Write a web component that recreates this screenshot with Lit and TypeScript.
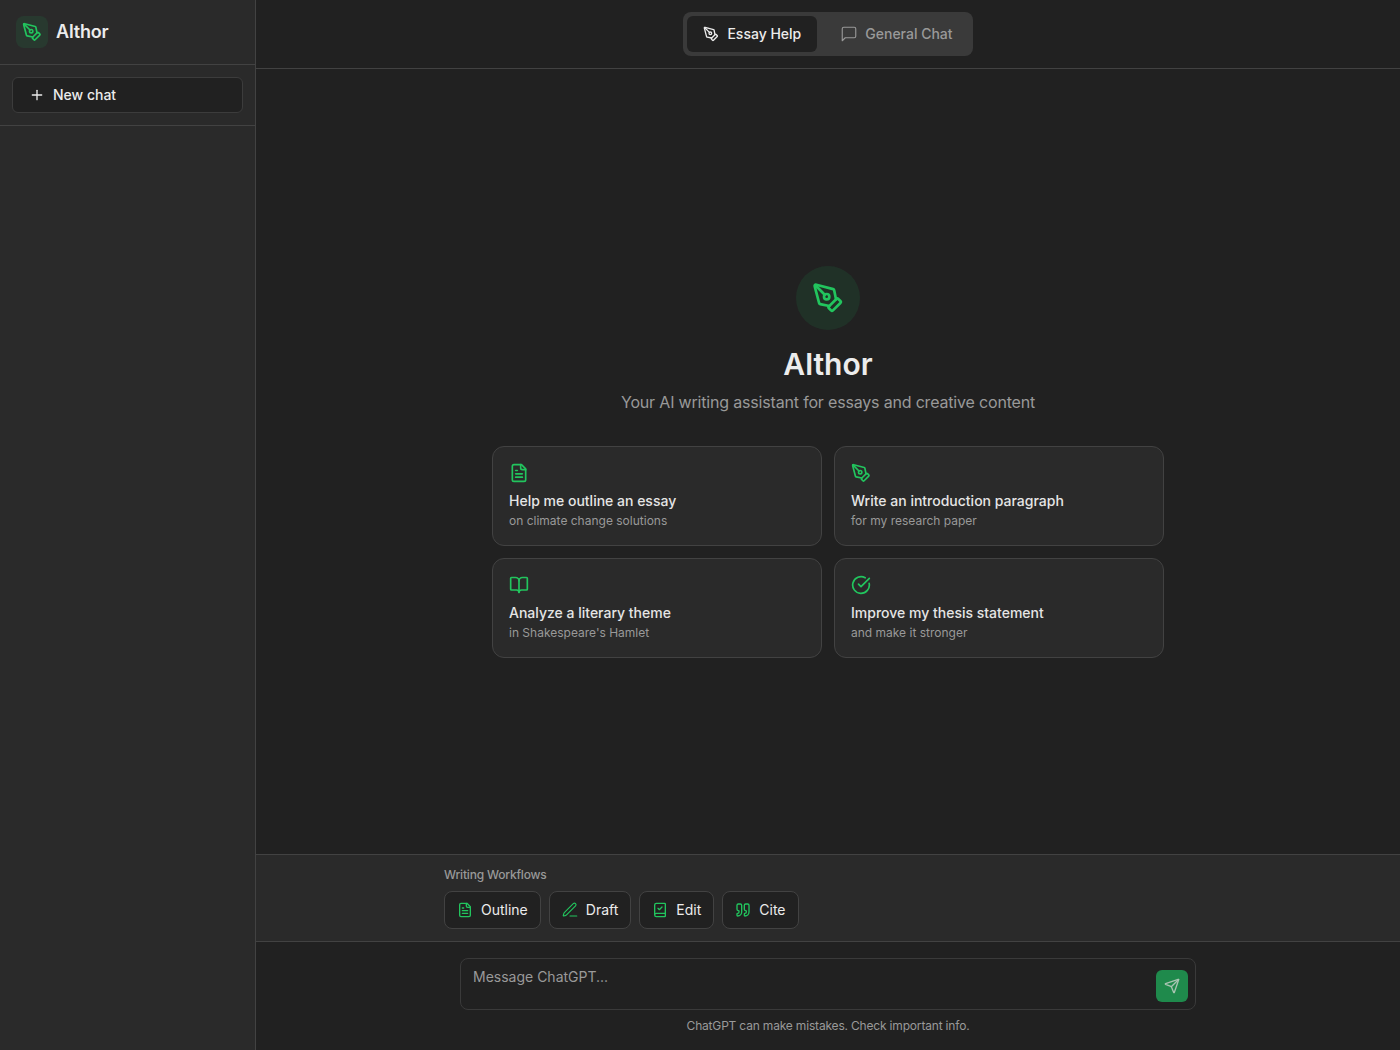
import { LitElement, css, html, svg } from 'lit';
import { customElement } from 'lit/decorators.js';

const icons = {
  pen: svg`<path d="M15.707 21.293a1 1 0 0 1-1.414 0l-1.586-1.586a1 1 0 0 1 0-1.414l5.586-5.586a1 1 0 0 1 1.414 0l1.586 1.586a1 1 0 0 1 0 1.414z"/><path d="m18 13-1.375-6.874a1 1 0 0 0-.746-.776L3.235 2.028a1 1 0 0 0-1.207 1.207L5.35 15.879a1 1 0 0 0 .776.746L13 18"/><path d="m2.3 2.3 7.286 7.286"/><circle cx="11" cy="11" r="2"/>`,
  plus: svg`<path d="M5 12h14"/><path d="M12 5v14"/>`,
  message: svg`<path d="M21 15a2 2 0 0 1-2 2H7l-4 4V5a2 2 0 0 1 2-2h14a2 2 0 0 1 2 2z"/>`,
  file: svg`<path d="M15 2H6a2 2 0 0 0-2 2v16a2 2 0 0 0 2 2h12a2 2 0 0 0 2-2V7Z"/><path d="M14 2v4a2 2 0 0 0 2 2h4"/><path d="M10 9H8"/><path d="M16 13H8"/><path d="M16 17H8"/>`,
  book: svg`<path d="M12 7v14"/><path d="M3 18a1 1 0 0 1-1-1V4a1 1 0 0 1 1-1h5a4 4 0 0 1 4 4 4 4 0 0 1 4-4h5a1 1 0 0 1 1 1v13a1 1 0 0 1-1 1h-6a3 3 0 0 0-3 3 3 3 0 0 0-3-3z"/>`,
  check: svg`<path d="M21.801 10A10 10 0 1 1 17 3.335"/><path d="m9 11 3 3L22 4"/>`,
  line: svg`<path d="M12 20h9"/><path d="M16.376 3.622a1 1 0 0 1 3.002 3.002L7.368 18.635a2 2 0 0 1-.855.506l-2.872.838a.5.5 0 0 1-.62-.62l.838-2.872a2 2 0 0 1 .506-.854z"/>`,
  bookCheck: svg`<path d="M4 19.5v-15A2.5 2.5 0 0 1 6.5 2H19a1 1 0 0 1 1 1v18a1 1 0 0 1-1 1H6.5a1 1 0 0 1 0-5H20"/><path d="m9 9.5 2 2 4-4"/>`,
  quote: svg`<path d="M16 3a2 2 0 0 0-2 2v6a2 2 0 0 0 2 2 1 1 0 0 1 1 1v1a2 2 0 0 1-2 2 1 1 0 0 0-1 1v2a1 1 0 0 0 1 1 6 6 0 0 0 6-6V5a2 2 0 0 0-2-2z"/><path d="M5 3a2 2 0 0 0-2 2v6a2 2 0 0 0 2 2 1 1 0 0 1 1 1v1a2 2 0 0 1-2 2 1 1 0 0 0-1 1v2a1 1 0 0 0 1 1 6 6 0 0 0 6-6V5a2 2 0 0 0-2-2z"/>`,
  send: svg`<path d="M14.536 21.686a.5.5 0 0 0 .937-.024l6.5-19a.496.496 0 0 0-.635-.635l-19 6.5a.5.5 0 0 0-.024.937l7.93 3.18a2 2 0 0 1 1.112 1.11z"/><path d="m21.854 2.147-10.94 10.939"/>`,
};

type IconName = keyof typeof icons;

const icon = (name: IconName, size = 16, cls = '', weight = 2) => html`
  <svg class=${cls} width=${size} height=${size} viewBox="0 0 24 24" fill="none" stroke="currentColor"
    stroke-width=${weight} stroke-linecap="round" stroke-linejoin="round">${icons[name]}</svg>
`;

const prompts: { icon: IconName; title: string; sub: string }[] = [
  { icon: 'file', title: 'Help me outline an essay', sub: 'on climate change solutions' },
  { icon: 'pen', title: 'Write an introduction paragraph', sub: 'for my research paper' },
  { icon: 'book', title: 'Analyze a literary theme', sub: "in Shakespeare's Hamlet" },
  { icon: 'check', title: 'Improve my thesis statement', sub: 'and make it stronger' },
];

const workflows: { icon: IconName; label: string }[] = [
  { icon: 'file', label: 'Outline' },
  { icon: 'line', label: 'Draft' },
  { icon: 'bookCheck', label: 'Edit' },
  { icon: 'quote', label: 'Cite' },
];

@customElement('app-root')
export class AppRoot extends LitElement {
  static styles = css`
    :host {
      display: flex;
      height: 100vh;
      overflow: hidden;
      background: #212121;
      color: #ececec;
      font-family: Inter, 'Liberation Sans', sans-serif;
      --line: #424242;
      --green: #22c55e;
    }

    svg {
      display: block;
      flex: none;
    }

    button {
      font: inherit;
      color: inherit;
      cursor: pointer;
    }

    .sidebar {
      width: 256px;
      flex: none;
      box-sizing: border-box;
      background: #2a2a2a;
      border-right: 1px solid var(--line);
    }

    .brand {
      display: flex;
      align-items: center;
      gap: 8px;
      height: 65px;
      box-sizing: border-box;
      padding: 0 16px;
      border-bottom: 1px solid var(--line);
    }

    .brand-mark {
      width: 32px;
      height: 32px;
      display: flex;
      align-items: center;
      justify-content: center;
      border-radius: 8px;
      background: rgba(34, 197, 94, 0.1);
      color: var(--green);
    }

    .brand-name {
      font-size: 18px;
      line-height: 28px;
      font-weight: 600;
      letter-spacing: -0.18px;
    }

    .new-wrap {
      padding: 12px;
      border-bottom: 1px solid var(--line);
    }

    .new-chat {
      width: 100%;
      height: 36px;
      display: flex;
      align-items: center;
      gap: 8px;
      padding: 0 16px;
      box-sizing: border-box;
      background: #212121;
      border: 1px solid #3c3c3c;
      border-radius: 6px;
      font-size: 14px;
      line-height: 20px;
      font-weight: 500;
    }

    .main {
      flex: 1;
      min-width: 0;
      display: flex;
      flex-direction: column;
    }

    .topbar {
      display: flex;
      justify-content: center;
      padding: 12px;
      border-bottom: 1px solid var(--line);
    }

    .tabs {
      display: flex;
      gap: 8px;
      padding: 4px;
      border-radius: 8px;
      background: #3a3a3a;
    }

    .tab {
      display: flex;
      align-items: center;
      gap: 8px;
      height: 36px;
      padding: 0 16px;
      border: 0;
      border-radius: 6px;
      background: transparent;
      color: #999999;
      font-size: 14px;
      line-height: 20px;
      font-weight: 500;
    }

    .tab.active {
      background: #212121;
      color: #ececec;
    }

    /* the speech bubble sits a touch larger than the pen beside it */
    .tab .wide {
      margin: 0 -1px;
    }

    .welcome {
      flex: 1;
      min-height: 0;
      display: flex;
      flex-direction: column;
      align-items: center;
      justify-content: center;
    }

    .hero-mark {
      width: 64px;
      height: 64px;
      display: flex;
      align-items: center;
      justify-content: center;
      border-radius: 50%;
      background: rgba(34, 197, 94, 0.1);
      color: var(--green);
    }

    h1 {
      margin: 16px 0 8px;
      font-size: 30px;
      line-height: 36px;
      font-weight: 600;
    }

    .tagline {
      margin: 0 0 32px;
      font-size: 16px;
      line-height: 24px;
      letter-spacing: -0.18px;
      color: #999999;
    }

    .prompts {
      width: 672px;
      display: grid;
      grid-template-columns: 1fr 1fr;
      gap: 12px;
    }

    .prompt {
      display: flex;
      flex-direction: column;
      align-items: flex-start;
      padding: 16px;
      text-align: left;
      background: #2a2a2a;
      border: 1px solid var(--line);
      border-radius: 12px;
    }

    .prompt svg {
      color: var(--green);
    }

    .prompt-title {
      margin-top: 8px;
      font-size: 14px;
      line-height: 20px;
      font-weight: 500;
      color: #e5e5e5;
    }

    .prompt-sub {
      margin-top: 2px;
      font-size: 12px;
      line-height: 16px;
      color: #999999;
    }

    .workflows {
      padding: 12px 0;
      background: #2a2a2a;
      border-top: 1px solid var(--line);
      border-bottom: 1px solid var(--line);
    }

    .workflows-inner {
      width: 768px;
      margin: 0 auto;
    }

    .workflows-label {
      margin-bottom: 8px;
      font-size: 12px;
      line-height: 16px;
      font-weight: 500;
      letter-spacing: -0.18px;
      color: #999999;
    }

    .workflow-list {
      display: flex;
      gap: 8px;
    }

    .workflow {
      display: flex;
      align-items: center;
      gap: 8px;
      height: 38px;
      padding: 0 12px;
      background: #212121;
      border: 1px solid var(--line);
      border-radius: 8px;
      font-size: 14px;
      line-height: 20px;
    }

    .workflow svg {
      color: var(--green);
    }

    .workflow .wide {
      margin: 0 -1px;
    }

    .composer {
      padding: 16px 0;
    }

    .composer-box {
      position: relative;
      width: 736px;
      margin: 0 auto;
    }

    textarea {
      display: block;
      width: 100%;
      height: 52px;
      box-sizing: border-box;
      padding: 8px 48px 8px 12px;
      resize: none;
      outline: none;
      background: #212121;
      border: 1px solid #3a3a3a;
      border-radius: 8px;
      color: #ececec;
      font: 14px/20px Inter, 'Liberation Sans', sans-serif;
    }

    textarea::placeholder {
      color: #999999;
      opacity: 1;
    }

    .send {
      position: absolute;
      right: 8px;
      bottom: 8px;
      width: 32px;
      height: 32px;
      display: flex;
      align-items: center;
      justify-content: center;
      padding: 0;
      border: 0;
      border-radius: 6px;
      background: #1f8a4c;
      color: #a9c4b2;
    }

    .disclaimer {
      margin: 8px 0 0;
      text-align: center;
      font-size: 12px;
      line-height: 16px;
      letter-spacing: -0.18px;
      color: #999999;
    }
  `;

  protected render() {
    return html`
      <aside class="sidebar">
        <div class="brand">
          <div class="brand-mark">${icon('pen', 20)}</div>
          <div class="brand-name">Althor</div>
        </div>
        <div class="new-wrap">
          <button class="new-chat">${icon('plus', 16)} New chat</button>
        </div>
      </aside>
      <main class="main">
        <header class="topbar">
          <div class="tabs">
            <button class="tab active">${icon('pen', 16)} Essay Help</button>
            <button class="tab">${icon('message', 18, 'wide', 1.5)} General Chat</button>
          </div>
        </header>
        <section class="welcome">
          <div class="hero-mark">${icon('pen', 32)}</div>
          <h1>Althor</h1>
          <p class="tagline">Your AI writing assistant for essays and creative content</p>
          <div class="prompts">
            ${prompts.map(
              (p) => html`
                <button class="prompt">
                  ${icon(p.icon, 20)}
                  <span class="prompt-title">${p.title}</span>
                  <span class="prompt-sub">${p.sub}</span>
                </button>
              `
            )}
          </div>
        </section>
        <section class="workflows">
          <div class="workflows-inner">
            <div class="workflows-label">Writing Workflows</div>
            <div class="workflow-list">
              ${workflows.map(
                (w) => html`<button class="workflow">
                  ${w.icon === 'line' ? icon(w.icon, 18, 'wide', 1.5) : icon(w.icon, 16)} ${w.label}
                </button>`
              )}
            </div>
          </div>
        </section>
        <footer class="composer">
          <div class="composer-box">
            <textarea placeholder="Message ChatGPT..."></textarea>
            <button class="send">${icon('send', 16)}</button>
          </div>
          <p class="disclaimer">ChatGPT can make mistakes. Check important info.</p>
        </footer>
      </main>
    `;
  }
}
